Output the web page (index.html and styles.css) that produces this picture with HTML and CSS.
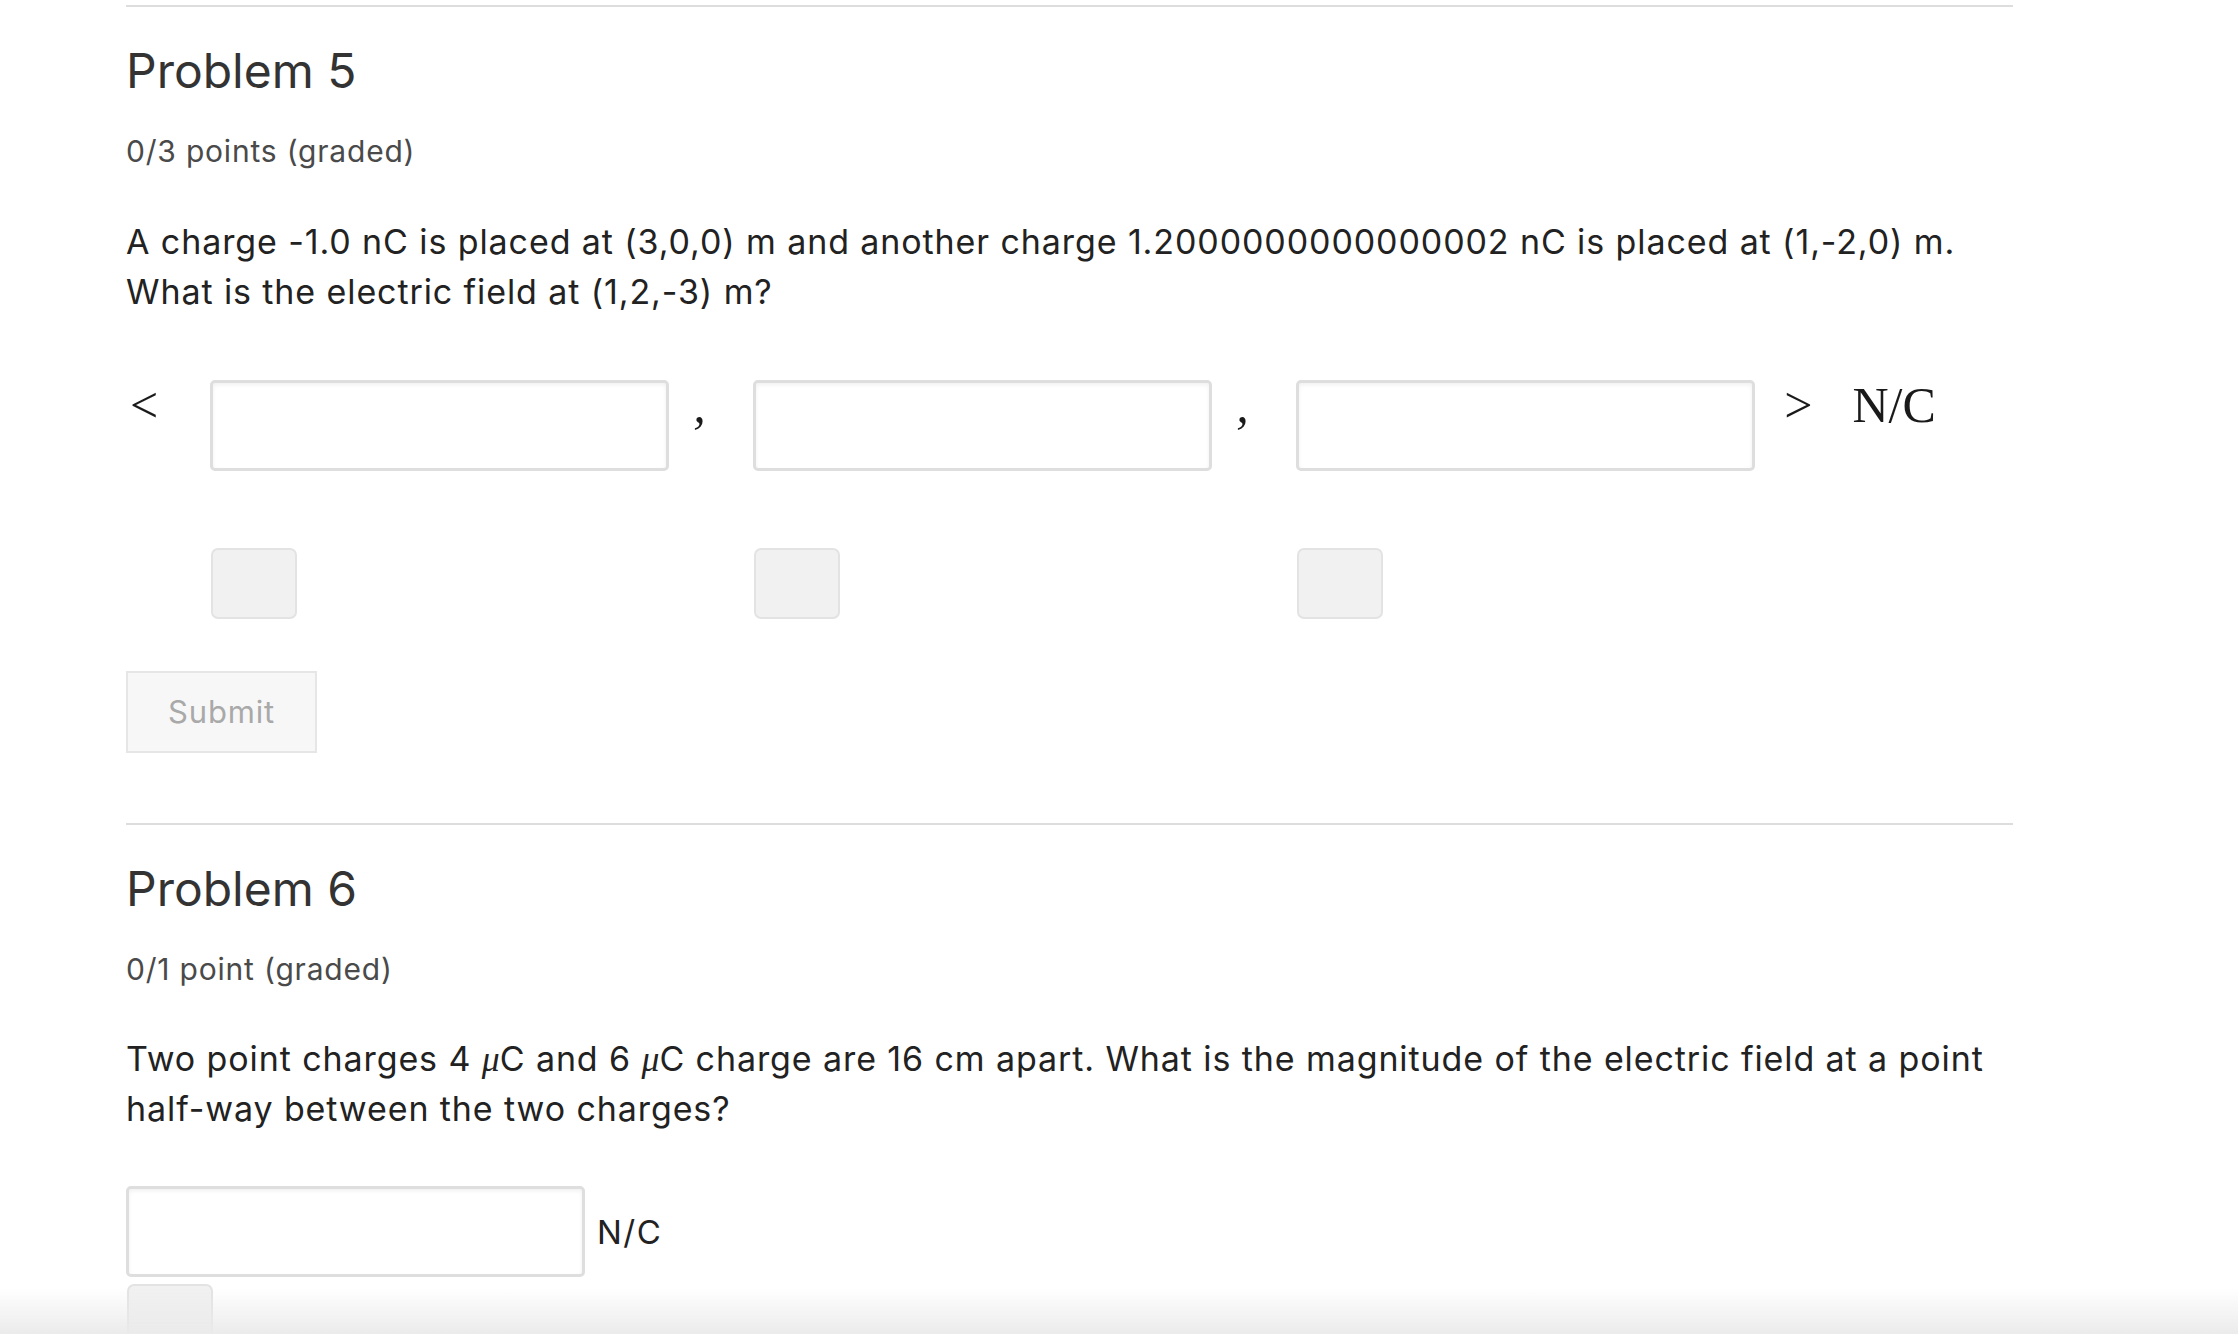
FILE: index.html
```html
<!DOCTYPE html>
<html lang="en">
<head>
    <meta charset="UTF-8">
    <meta name="viewport" content="width=device-width, initial-scale=1.0">
    <title>Problems</title>
    <link rel="stylesheet" href="styles.css">
</head>
<body>
    <div class="course-content">

        <!-- Problem 5 -->
        <div class="problem">
            <h3 class="problem-header">Problem 5</h3>
            <div class="problem-progress">0/3 points (graded)</div>
            <p class="problem-text">A charge -1.0 nC is placed at (3,0,0) m and another charge 1.2000000000000002 nC is placed at (1,-2,0) m. What is the electric field at (1,2,-3) m?</p>

            <div class="vector-row">
                <span class="math-sym bracket-left">&lt;</span>
                <div class="input-col">
                    <input class="answer-input" type="text">
                    <span class="status"></span>
                </div>
                <span class="math-sym comma">,</span>
                <div class="input-col">
                    <input class="answer-input" type="text">
                    <span class="status"></span>
                </div>
                <span class="math-sym comma">,</span>
                <div class="input-col">
                    <input class="answer-input" type="text">
                    <span class="status"></span>
                </div>
                <span class="math-sym bracket-right">&gt;</span>
                <span class="math-sym unit">N/C</span>
            </div>

            <button class="submit-btn" type="button">Submit</button>
        </div>

        <!-- Problem 6 -->
        <div class="problem">
            <h3 class="problem-header">Problem 6</h3>
            <div class="problem-progress">0/1 point (graded)</div>
            <p class="problem-text">Two point charges 4 <span class="mu">μ</span>C and 6 <span class="mu">μ</span>C charge are 16 cm apart. What is the magnitude of the electric field at a point half-way between the two charges?</p>

            <div class="single-answer">
                <div class="answer-line">
                    <input class="answer-input" type="text">
                    <span class="unit-text">N/C</span>
                </div>
                <span class="status"></span>
            </div>
        </div>

    </div>

    <div class="bottom-fade"></div>
</body>
</html>
```

FILE: styles.css
```css
body {
    margin: 0;
    padding: 0;
    background: white;
    font-family: Inter, "Open Sans", Arial, sans-serif;
    color: #222;
}

.course-content {
    width: 1887px;
    margin-left: 126px;
    padding-top: 5px;
}

/* Problem blocks */
.problem {
    border-top: 2px solid #dddddd;
    padding-top: 34px;
    padding-bottom: 70px;
}

.problem-header {
    margin: 0;
    font-size: 48px;
    line-height: 60px;
    font-weight: 400;
    color: #333;
}

.problem-progress {
    margin-top: 29px;
    font-size: 30px;
    line-height: 43.5px;
    letter-spacing: 0.8px;
    color: #4a4a4a;
}

.problem-text {
    margin: 43px -12px 0 0;
    font-size: 34px;
    line-height: 50px;
    letter-spacing: 0.9px;
    color: #222;
}

.mu {
    font-family: "Liberation Serif", serif;
    font-style: italic;
    font-size: 1.05em;
    line-height: 1;
    letter-spacing: 0;
}

/* Vector answer row */
.vector-row {
    display: flex;
    align-items: flex-start;
    margin-top: 63px;
}

.math-sym {
    font-family: "Liberation Serif", "DejaVu Serif", serif;
    font-size: 50px;
    line-height: 50px;
    color: #1a1a1a;
}

.bracket-left {
    margin-left: 4px;
    margin-right: 52px;
}

.comma {
    width: 84px;
    padding-left: 24px;
    box-sizing: border-box;
    font-style: italic;
}

.bracket-right {
    margin-left: 29px;
}

.unit {
    margin-left: 40px;
}

.input-col {
    display: flex;
    flex-direction: column;
    align-items: flex-start;
    gap: 77px;
}

.answer-input {
    width: 459px;
    height: 91px;
    box-sizing: border-box;
    margin: 0;
    padding: 0 14px;
    border: 3px solid #dedede;
    border-radius: 5px;
    background: white;
    box-shadow: inset 0 2px 4px rgba(0, 0, 0, 0.06);
    font-family: Inter, sans-serif;
    font-size: 31px;
}

.status {
    display: block;
    width: 86px;
    height: 71px;
    box-sizing: border-box;
    margin-left: 1px;
    background: #f1f1f1;
    border: 2px solid #e3e3e3;
    border-radius: 7px;
}

.submit-btn {
    display: block;
    margin-top: 52px;
    width: 191px;
    height: 82px;
    padding: 0;
    background: #f7f7f7;
    border: 2px solid #e6e6e6;
    border-radius: 0;
    color: #a9a9a9;
    font-family: Inter, sans-serif;
    font-size: 31px;
    letter-spacing: 0.8px;
}

/* Single answer */
.single-answer {
    margin-top: 52px;
    display: flex;
    flex-direction: column;
    align-items: flex-start;
    gap: 7px;
}

.answer-line {
    display: flex;
    align-items: center;
    gap: 12px;
}

.unit-text {
    font-size: 33px;
    letter-spacing: 1.5px;
    color: #222;
}

/* fade along the bottom edge */
.bottom-fade {
    position: fixed;
    left: 0;
    right: 0;
    bottom: 0;
    height: 46px;
    background: linear-gradient(to bottom, rgba(238, 238, 238, 0), rgba(234, 234, 234, 0.95));
    pointer-events: none;
}
```
